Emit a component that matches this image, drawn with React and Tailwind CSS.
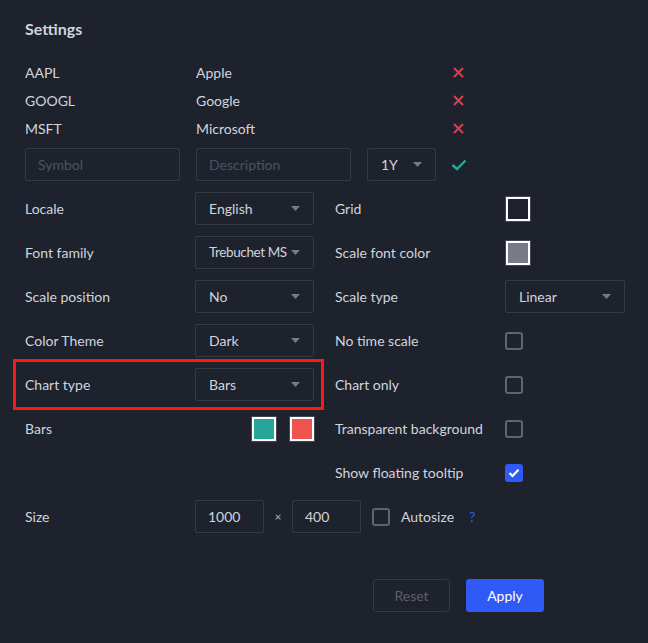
import React from "react";

const font = { fontFamily: '"Lato", "Noto Sans", sans-serif' };

function Caret() {
  return (
    <svg width="9" height="5" viewBox="0 0 9 5" className="shrink-0">
      <path d="M0 0 L9 0 L4.5 5 Z" fill="#787b86" />
    </svg>
  );
}

function Select({ value, w = "w-[119px]", tight }) {
  return (
    <div className={`${w} h-[33px] border border-[#363a45] rounded-[2px] flex items-center justify-between gap-[2px] pl-[13px] pr-[13px] text-[14px] text-[#d1d4dc]`}>
      <span className={tight ? "whitespace-nowrap text-[13.5px] tracking-[-0.4px]" : "whitespace-nowrap"}>{value}</span>
      <Caret />
    </div>
  );
}

function Checkbox({ checked }) {
  if (checked)
    return (
      <div className="w-[18px] h-[18px] rounded-[3px] bg-[#2f5af5] flex items-center justify-center">
        <svg width="12" height="10" viewBox="0 0 12 10">
          <path d="M1.5 5 L4.5 8 L10.5 1.8" stroke="white" strokeWidth="2.2" fill="none" />
        </svg>
      </div>
    );
  return <div className="w-[18px] h-[18px] rounded-[3px] border-2 border-[#5d6570]" />;
}

function Swatch({ color }) {
  return (
    <div className="w-[26px] h-[26px] border border-[#434651] p-0">
      <div className="w-full h-full border-2 border-white" style={{ background: color }} />
    </div>
  );
}

function XIcon() {
  return (
    <svg width="11" height="11" viewBox="0 0 11 11">
      <path d="M1 1 L10 10 M10 1 L1 10" stroke="#f23645" strokeWidth="2" />
    </svg>
  );
}

function Label({ children }) {
  return <div className="w-[170px] shrink-0 text-[14px] text-[#d1d4dc] whitespace-nowrap">{children}</div>;
}

function Row({ children }) {
  return <div className="h-[33px] flex items-center">{children}</div>;
}

export default function App() {
  const symbols = [
    ["AAPL", "Apple"],
    ["GOOGL", "Google"],
    ["MSFT", "Microsoft"],
  ];
  return (
    <div className="w-[648px] h-[643px] bg-[#1e222d] pl-[25px] pt-[18px] text-[#d1d4dc]" style={font}>
      <div className="h-[22px] leading-[22px] text-[16px] font-bold text-[#d1d4dc]">Settings</div>
      <div className="mt-[18px] flex flex-col">
        {symbols.map(([s, d]) => (
          <div key={s} className="h-[28px] flex items-center text-[14px]">
            <div className="w-[171px]">{s}</div>
            <div className="w-[257px]">{d}</div>
            <XIcon />
          </div>
        ))}
      </div>
      <div className="mt-[6px] h-[33px] flex items-center gap-[16px]">
        <div className="w-[155px] h-[33px] border border-[#363a45] rounded-[2px] flex items-center pl-[12px] text-[14px] text-[#4c525e]">Symbol</div>
        <div className="w-[155px] h-[33px] border border-[#363a45] rounded-[2px] flex items-center pl-[12px] text-[14px] text-[#4c525e]">Description</div>
        <Select value="1Y" w="w-[69px]" />
        <svg width="16" height="12" viewBox="0 0 16 12" className="ml-[-1px]">
          <path d="M1.5 6 L6 10 L14.5 1.5" stroke="#22ab94" strokeWidth="2.4" fill="none" />
        </svg>
      </div>

      <div className="mt-[11px] grid grid-cols-[310px_1fr] gap-y-[11px]">
        <Row><Label>Locale</Label><Select value="English" /></Row>
        <Row><Label>Grid</Label><Swatch color="#1e222d" /></Row>

        <Row><Label>Font family</Label><Select value="Trebuchet MS" tight /></Row>
        <Row><Label>Scale font color</Label><Swatch color="#787b86" /></Row>

        <Row><Label>Scale position</Label><Select value="No" /></Row>
        <Row><Label>Scale type</Label><Select value="Linear" w="w-[120px]" /></Row>

        <Row><Label>Color Theme</Label><Select value="Dark" /></Row>
        <Row><Label>No time scale</Label><Checkbox /></Row>

        <div className="relative">
          <Row><Label>Chart type</Label><Select value="Bars" /></Row>
          <div className="absolute left-[-12px] top-[-9px] w-[311px] h-[51px] border-[3px] border-[#fa1818] pointer-events-none" />
        </div>
        <Row><Label>Chart only</Label><Checkbox /></Row>

        <Row>
          <Label>Bars</Label>
          <div className="w-[56px]" />
          <div className="flex gap-[12px]">
            <Swatch color="#26a69a" />
            <Swatch color="#ef5350" />
          </div>
        </Row>
        <Row><Label>Transparent background</Label><Checkbox /></Row>

        <Row />
        <Row><Label>Show floating tooltip</Label><Checkbox checked /></Row>

        <div className="col-span-2 h-[33px] flex items-center">
          <Label>Size</Label>
          <div className="w-[69px] h-[33px] border border-[#363a45] rounded-[2px] flex items-center pl-[12px] text-[14px]">1000</div>
          <div className="w-[28px] text-center text-[12px] text-[#b2b5be]">×</div>
          <div className="w-[69px] h-[33px] border border-[#363a45] rounded-[2px] flex items-center pl-[12px] text-[14px]">400</div>
          <div className="ml-[11px]"><Checkbox /></div>
          <div className="ml-[11px] text-[14px]">Autosize</div>
          <div className="ml-[15px] text-[14px] text-[#2f5af5]">?</div>
        </div>
      </div>

      <div className="mt-[46px] flex gap-[16px] pl-[348px]">
        <div className="w-[77px] h-[33px] border border-[#363a45] rounded-[3px] flex items-center justify-center text-[14px] text-[#5d606b]">Reset</div>
        <div className="w-[78px] h-[33px] bg-[#2f5af5] rounded-[3px] flex items-center justify-center text-[14px] text-white">Apply</div>
      </div>
    </div>
  );
}
